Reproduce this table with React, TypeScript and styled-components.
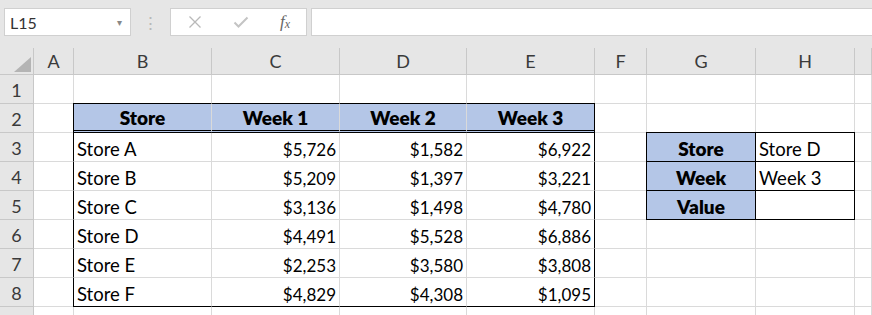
import React from "react";
import styled, { createGlobalStyle } from "styled-components";

const Global = createGlobalStyle`
  html, body {
    margin: 0;
    padding: 0;
    background: #ffffff;
  }
  body {
    font-family: Lato, "Open Sans", "Liberation Sans", sans-serif;
  }
`;

const COLS = ["A", "B", "C", "D", "E", "F", "G", "H", ""];
const WIDTHS = "34px 40px 138px 128px 127px 128px 52px 109px 99px 1fr";

type Edge = { t?: boolean; l?: boolean; r?: boolean; b?: boolean; dbl?: boolean };

type CellData = {
  text?: string;
  align?: "left" | "right" | "center";
  bold?: boolean;
  fill?: boolean;
  num?: boolean;
  edge?: Edge;
};

const stores = [
  ["Store A", "$5,726", "$1,582", "$6,922"],
  ["Store B", "$5,209", "$1,397", "$3,221"],
  ["Store C", "$3,136", "$1,498", "$4,780"],
  ["Store D", "$4,491", "$5,528", "$6,886"],
  ["Store E", "$2,253", "$3,580", "$3,808"],
  ["Store F", "$4,829", "$4,308", "$1,095"],
];

const lookup: Record<number, [string, string]> = {
  3: ["Store", "Store D"],
  4: ["Week", "Week 3"],
  5: ["Value", ""],
};

function buildRow(r: number): CellData[] {
  const row: CellData[] = Array.from({ length: 9 }, () => ({}));
  if (r === 2) {
    ["Store", "Week 1", "Week 2", "Week 3"].forEach((t, i) => {
      row[i + 1] = {
        text: t,
        align: "center",
        bold: true,
        fill: true,
        edge: { t: true, l: i === 0, r: i === 3, b: true, dbl: true },
      };
    });
  }
  if (r >= 3 && r <= 8) {
    stores[r - 3].forEach((t, i) => {
      row[i + 1] = {
        text: t,
        align: i === 0 ? "left" : "right",
        num: i > 0,
        edge: { l: i === 0, r: i === 3, b: r === 8 },
      };
    });
  }
  if (lookup[r]) {
    const [k, v] = lookup[r];
    row[6] = { text: k, align: "center", bold: true, fill: true, edge: { t: r === 3, l: true, r: true, b: true } };
    row[7] = { text: v, align: "left", edge: { t: r === 3, r: true, b: true } };
  }
  return row;
}

export default function App() {
  return (
    <Page>
      <Global />
      <FormulaBar>
        <NameBox>
          <span>L15</span>
          <Caret>▾</Caret>
        </NameBox>
        <Grip>⋮</Grip>
        <FxBox>
          <svg width="14" height="14" viewBox="0 0 14 14">
            <path d="M1.5 1.5 L12.5 12.5 M12.5 1.5 L1.5 12.5" stroke="#b9b9b9" strokeWidth="1.3" fill="none" />
          </svg>
          <svg width="16" height="14" viewBox="0 0 16 14">
            <path d="M1.5 7.5 L5.5 11.5 L14.5 2.5" stroke="#c4c4c4" strokeWidth="2" fill="none" />
          </svg>
          <Fx>
            f<sub>x</sub>
          </Fx>
        </FxBox>
        <Input />
      </FormulaBar>
      <Sheet>
        <Corner>
          <svg width="20" height="17" viewBox="0 0 20 17">
            <polygon points="19,1 19,16 2,16" fill="#b4b4b4" />
          </svg>
        </Corner>
        {COLS.map((c, i) => (
          <ColHead key={"h" + i}>{c}</ColHead>
        ))}
        {Array.from({ length: 9 }, (_, k) => k + 1).map((r) => (
          <React.Fragment key={r}>
            <RowHead>{r}</RowHead>
            {buildRow(r).map((cell, i) => (
              <Cell
                key={i}
                $align={cell.align || "left"}
                $bold={!!cell.bold}
                $fill={!!cell.fill}
                $num={!!cell.num}
                $t={!!cell.edge?.t}
                $l={!!cell.edge?.l}
                $r={!!cell.edge?.r}
                $b={!!cell.edge?.b}
                $dbl={!!cell.edge?.dbl}
              >
                {cell.text}
              </Cell>
            ))}
          </React.Fragment>
        ))}
      </Sheet>
    </Page>
  );
}

const Page = styled.div`
  width: 872px;
  height: 315px;
  overflow: hidden;
  background: #e6e6e6;
`;

const FormulaBar = styled.div`
  height: 48px;
  display: flex;
  align-items: flex-start;
  padding: 8px 0 0 4px;
  box-sizing: border-box;
`;

const NameBox = styled.div`
  width: 127px;
  height: 28px;
  box-sizing: border-box;
  background: #fff;
  border: 1px solid #d0d0d0;
  display: flex;
  align-items: center;
  justify-content: space-between;
  padding: 0 8px 0 5px;
  font-family: Lato, "Open Sans", sans-serif;
  font-size: 16px;
  color: #333;
`;

const Caret = styled.span`
  font-size: 10px;
  color: #888;
`;

const Grip = styled.div`
  width: 39px;
  height: 28px;
  display: flex;
  align-items: center;
  justify-content: center;
  color: #b8b8b8;
  font-size: 17px;
`;

const FxBox = styled.div`
  width: 137px;
  height: 28px;
  box-sizing: border-box;
  background: #fff;
  border: 1px solid #d0d0d0;
  display: flex;
  align-items: center;
  justify-content: space-between;
  padding: 0 16px 0 17px;
`;

const Fx = styled.span`
  font-family: "Liberation Serif", serif;
  font-style: italic;
  font-size: 17px;
  color: #666;
  sub {
    font-size: 12px;
    vertical-align: -1px;
  }
`;

const Input = styled.div`
  flex: 1;
  height: 28px;
  margin-left: 4px;
  box-sizing: border-box;
  background: #fff;
  border: 1px solid #d0d0d0;
  border-right: none;
`;

const Sheet = styled.div`
  display: grid;
  grid-template-columns: ${WIDTHS};
  grid-template-rows: 27px repeat(9, 29px);
  background: #fff;
`;

const Corner = styled.div`
  background: #e6e6e6;
  border-right: 1px solid #c8c8c8;
  border-bottom: 1px solid #c8c8c8;
  display: flex;
  align-items: flex-end;
  justify-content: flex-end;
  padding: 0 1px 1px 0;
`;

const ColHead = styled.div`
  background: #e6e6e6;
  border-right: 1px solid #c8c8c8;
  border-bottom: 1px solid #c8c8c8;
  display: flex;
  align-items: center;
  justify-content: center;
  font-family: Lato, "Open Sans", sans-serif;
  font-size: 18px;
  color: #3a3a3a;
`;

const RowHead = styled(ColHead)`
  padding-top: 1px;
`;

const Cell = styled.div<{
  $align: string;
  $bold: boolean;
  $fill: boolean;
  $num: boolean;
  $t: boolean;
  $l: boolean;
  $r: boolean;
  $b: boolean;
  $dbl: boolean;
}>`
  box-sizing: border-box;
  border-right: 1px solid ${(p) => (p.$r ? "#000" : "#dadada")};
  border-bottom: ${(p) => (p.$dbl ? "3px double #000" : `1px solid ${p.$b ? "#000" : "#dadada"}`)};
  border-top: ${(p) => (p.$t ? "1px solid #000" : "none")};
  border-left: ${(p) => (p.$l ? "1px solid #000" : "none")};
  margin-left: ${(p) => (p.$l ? "-1px" : "0")};
  margin-top: ${(p) => (p.$t ? "-1px" : "0")};
  background: ${(p) => (p.$fill ? "#b4c6e7" : "#fff")};
  display: flex;
  align-items: flex-end;
  justify-content: ${(p) => (p.$align === "right" ? "flex-end" : p.$align === "center" ? "center" : "flex-start")};
  padding: 0 3px 1px;
  font-family: Lato, "Open Sans", sans-serif;
  font-size: ${(p) => (p.$bold ? "19px" : p.$num ? "17px" : "18.5px")};
  font-weight: ${(p) => (p.$bold ? 800 : 400)};
  color: #000;
  white-space: nowrap;
  overflow: hidden;
`;
